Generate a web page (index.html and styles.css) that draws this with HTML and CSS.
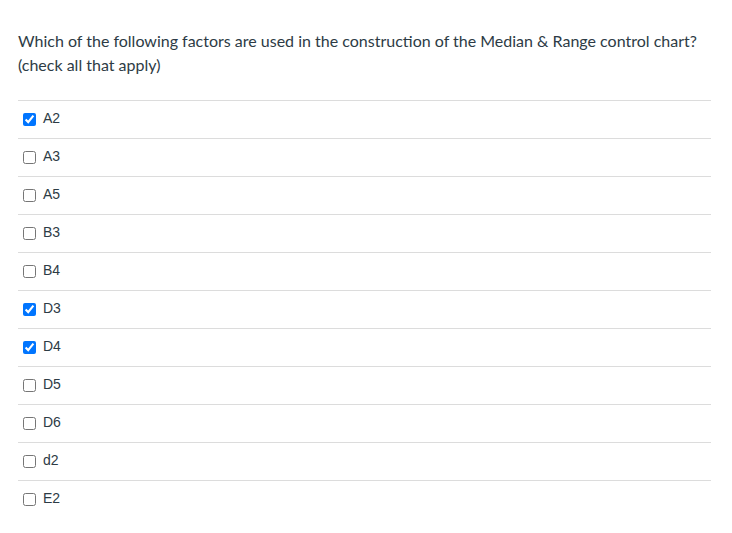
FILE: index.html
```html
<!DOCTYPE html>
<html>
<head>
<meta charset="utf-8">
<link rel="stylesheet" href="styles.css">
</head>
<body>
<div class="wrap">
  <p class="question">Which of the following factors are used in the construction of the Median &amp; Range control chart?<br>(check all that apply)</p>
  <div class="answers">
    <label class="answer"><input type="checkbox" checked><span>A2</span></label>
    <label class="answer"><input type="checkbox"><span>A3</span></label>
    <label class="answer"><input type="checkbox"><span>A5</span></label>
    <label class="answer"><input type="checkbox"><span>B3</span></label>
    <label class="answer"><input type="checkbox"><span>B4</span></label>
    <label class="answer"><input type="checkbox" checked><span>D3</span></label>
    <label class="answer"><input type="checkbox" checked><span>D4</span></label>
    <label class="answer"><input type="checkbox"><span>D5</span></label>
    <label class="answer"><input type="checkbox"><span>D6</span></label>
    <label class="answer"><input type="checkbox"><span>d2</span></label>
    <label class="answer"><input type="checkbox"><span>E2</span></label>
  </div>
</div>
</body>
</html>
```

FILE: styles.css
```css
html, body {
  margin: 0;
  padding: 0;
  background: #ffffff;
}

.wrap {
  padding: 29px 21px 0 18px;
}

.question {
  margin: 0 0 23px 0;
  font-family: Lato, "Liberation Sans", sans-serif;
  font-size: 16px;
  line-height: 24px;
  color: #2d3b45;
}

.answers {
  display: flex;
  flex-direction: column;
}

.answer {
  display: flex;
  align-items: center;
  height: 37px;
  border-top: 1px solid #dcdcdc;
  padding-left: 5px;
  font-family: "Liberation Sans", Arial, sans-serif;
  font-size: 14px;
  color: #2d3b45;
}

.answer input {
  width: 13px;
  height: 13px;
  margin: 0 7px 0 0;
}

.answer span {
  margin-bottom: 4px;
}
```
